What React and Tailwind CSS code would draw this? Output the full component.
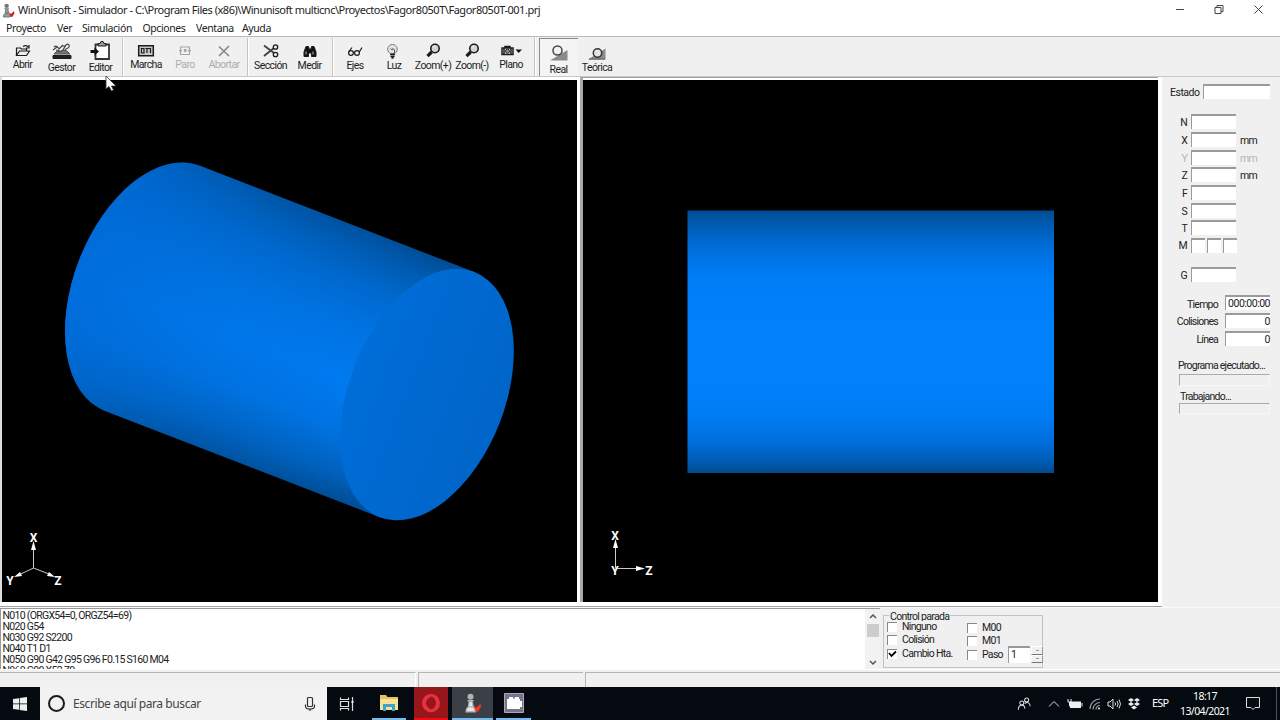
import React from "react";

const menus = [
  ["Proyecto", "w-[46px]"],
  ["Ver", "w-[20px]"],
  ["Simulación", "w-[55.5px]"],
  ["Opciones", "w-[48.5px]"],
  ["Ventana", "w-[41px]"],
  ["Ayuda", "w-[35px]"],
];

const code = [
  "N010 (ORGX54=0, ORGZ54=69)",
  "N020 G54",
  "N030 G92 S2200",
  "N040 T1 D1",
  "N050 G90 G42 G95 G96 F0.15 S160 M04",
  "N060 G00 X52 Z0",
];

function ChessIcon({ className }) {
  return (
    <svg viewBox="0 0 14 16" className={className}>
      <circle cx="5" cy="3" r="2.4" fill="#777" />
      <path d="M2.5 6h5M4 6.5 3.4 11h3.8L6.3 6.5M1.5 15c0-2 1-3.5 2-4h3.5c1 .8 1.8 2 1.8 4z" fill="#999" stroke="#777" />
      <path d="m7.5 9.5 2.3 2.2L13 8.5l.4 2.5-2.2 3.8-1.8.2z" fill="#c6201c" />
    </svg>
  );
}

function ToolButton({ label, text = "-mt-[2px]", disabled, pressed, children }) {
  return (
    <div
      className={`flex h-[38px] w-[39px] flex-col items-center pt-[3px] ${
        pressed ? "border-l border-t border-[#8a8a8a] bg-[#f4f4f4] pt-[2px]" : ""
      }`}
    >
      <svg
        viewBox="0 0 24 20"
        fill="none"
        stroke="currentColor"
        className={`h-5 w-6 shrink-0 ${disabled ? "text-[#a5a5a5]" : "text-[#1c1c1c]"}`}
      >
        {children}
      </svg>
      <span
        className={`whitespace-nowrap text-[10.5px] leading-[11px] tracking-[-0.6px] ${text} ${
          disabled ? "text-[#adadad]" : "text-[#1c1c1c]"
        }`}
      >
        {label}
      </span>
    </div>
  );
}

function Separator() {
  return <div className="h-[38px] w-[2px] border-l border-[#c4c4c4] bg-white" />;
}

function Magnifier() {
  return (
    <>
      <circle cx="14" cy="7.5" r="4.2" fill="#d4d4d4" strokeWidth="1.6" />
      <path d="m10.7 11-4.2 4.2" strokeWidth="3.2" />
      <path d="M12 6.6a2.4 2.4 0 0 1 2.2-1.6" stroke="#fff" />
    </>
  );
}

function Toolbar() {
  return (
    <div className="flex h-[40px] border-b border-[#c8c8c8] pl-[3px] pt-px">
      <div className="flex w-[119px]">
        <ToolButton label="Abrir">
          <path d="M5.5 14.5V7h4l1 1h5v2M5.5 14.5l3-4.5h10l-3 4.5zM12 5.5c2-1.5 4-1 5 .5m1-2v3h-3" fill="#eee" strokeWidth="1.2" />
        </ToolButton>
        <ToolButton label="Gestor" text="mt-px">
          <path d="M3 14.5h18v3H3z" fill="#222" />
          <path d="m4 13 3-3 3 1 3-2 4 1 3 3z" fill="#777" stroke="#555" />
          <path d="M4 6c2-2 4 0 5 2l4-4M6 9c2 0 4 2 6 1s2-4 4-6 4 0 3 2-3 1-4 3M3 9l4-3M12 5h3" strokeWidth="1.2" stroke="#444" />
        </ToolButton>
        <ToolButton label="Editor" text="mt-px">
          <path d="M6.500 3.500h13.500v14.500H6.500z" fill="#fff" strokeWidth="1.800" stroke="#333" />
          <path d="M9 5V2.500h2l1-2h2l1 2h2V5z" fill="#999" strokeWidth="1" />
          <path d="M1.500 9h4V6.500l4.500 4-4.500 4V12h-4z" fill="#111" stroke="none" />
        </ToolButton>
      </div>
      <Separator />
      <div className="ml-[2.500px] flex w-[120px]">
        <ToolButton label="Marcha">
          <path d="M4.700 4.700h14.600v10H4.700z" fill="#c8c8c8" strokeWidth="1.500" />
          <path d="M7.500 7.500h2.500v4.500H7.500zM11.500 7.500h5.500M13 7.500v4.500M16.500 7.500V12" strokeWidth="1.200" />
        </ToolButton>
        <ToolButton label="Paro" disabled>
          <path d="M7.500 6h9v7.500h-9zM11.500 8.500h1.500v2h-1.500zM6 9.700h3m6 0h3" strokeWidth="1.200" />
        </ToolButton>
        <ToolButton label="Abortar" disabled>
          <path d="m7 5.500 10 9.500M17 5 7 15" stroke="#888" strokeWidth="1.600" />
        </ToolButton>
      </div>
      <Separator />
      <div className="ml-[2.500px] flex w-[80.500px]">
        <ToolButton label="Sección" text="-mt-px">
          <path d="m5 4.500 10 7.500M5 15l10-8" strokeWidth="1.900" stroke="#444" />
          <circle cx="16.500" cy="6" r="2.200" strokeWidth="1.300" />
          <circle cx="16.500" cy="13.500" r="2.200" strokeWidth="1.300" />
        </ToolButton>
        <ToolButton label="Medir" text="-mt-px">
          <path d="M6 15.500V11l2-5.500h2.500L11 8h2l.5-2.500H16l2 5.500v4.500h-4.500V12h-3v3.500z" fill="#111" />
          <path d="M8 10.500v3m7-3v3" stroke="#bbb" />
        </ToolButton>
      </div>
      <Separator />
      <div className="ml-[2px] flex w-[198px]">
        <ToolButton label="Ejes" text="-mt-px">
          <circle cx="8" cy="12" r="2.400" strokeWidth="1.200" />
          <circle cx="14" cy="12" r="2.400" strokeWidth="1.200" />
          <path d="M5.600 11 9 6.500M16.300 11 19 6.500M10.500 11h1" strokeWidth="1.200" />
        </ToolButton>
        <ToolButton label="Luz" text="-mt-px">
          <path d="M8 12.500C3.500 9 6 3.500 10.500 3.500S17.200 9 13 12.500z" fill="#e2e2e2" stroke="#777" />
          <path d="M8.500 7.500 10 9l1-1.500L12.500 9v3" stroke="#555" />
          <path d="M8.200 13.500h4.800M8.500 15.500h4M9.500 17h2" strokeWidth="1.500" />
        </ToolButton>
        <ToolButton label="Zoom(+)" text="-mt-px">
          <Magnifier />
        </ToolButton>
        <ToolButton label="Zoom(-)" text="-mt-px">
          <Magnifier />
        </ToolButton>
        <ToolButton label="Plano">
          <path d="M3 7h11v6.500H3zM6 7V5.500h5V7M5 7v6M12 7v6" strokeWidth="1.500" />
          <circle cx="8.500" cy="10.200" r="2" fill="#999" />
          <path d="M16.500 8.500h6.500L19.700 12z" fill="#111" stroke="none" />
        </ToolButton>
      </div>
      <Separator />
      <div className="ml-[3px] flex">
        <ToolButton label="Real" text="mt-[2px]" pressed>
          <path d="M3 18.500h17.500V8z" fill="#8a8a8a" stroke="none" />
          <circle cx="10.500" cy="8.500" r="4.500" fill="#f2f2f2" stroke="#444" strokeWidth="1.500" />
        </ToolButton>
        <ToolButton label="Teórica" text="mt-px">
          <path d="M3 18.500h17.500V7.500z" fill="#8a8a8a" stroke="none" />
          <circle cx="12.500" cy="12" r="4.200" fill="#e4e4e4" stroke="#333" strokeWidth="1.500" />
          <path d="M4 18h16" strokeWidth="1.200" stroke="#666" />
        </ToolButton>
      </div>
    </div>
  );
}

function IsoView() {
  return (
    <svg viewBox="2 80 575 522" className="h-[522px] w-[575px] bg-black">
      <defs>
        <linearGradient id="side" x1="0" y1="-131.400" x2="0" y2="131.400" gradientUnits="userSpaceOnUse">
          <stop offset="0" stopColor="#004d96" />
          <stop offset="0.080" stopColor="#005ab0" />
          <stop offset="0.200" stopColor="#0068cd" />
          <stop offset="0.380" stopColor="#0075e6" />
          <stop offset="0.560" stopColor="#007bf2" />
          <stop offset="0.740" stopColor="#0074e4" />
          <stop offset="0.900" stopColor="#0061be" />
          <stop offset="1" stopColor="#004d94" />
        </linearGradient>
        <linearGradient id="depth" x1="-373" y1="0" x2="-40" y2="0" gradientUnits="userSpaceOnUse">
          <stop offset="0" stopColor="#006ad6" stopOpacity="0.800" />
          <stop offset="0.500" stopColor="#006bd4" stopOpacity="0.250" />
          <stop offset="1" stopColor="#006bd4" stopOpacity="0" />
        </linearGradient>
        <linearGradient id="cap" x1="0" x2="1" y1="0" y2="0">
          <stop offset="0" stopColor="#006dd8" />
          <stop offset="1" stopColor="#0065c8" />
        </linearGradient>
      </defs>
      <g transform="translate(427 394.600) rotate(21.150)">
        <path d="M0-131.400H-295A78 131.400 0 0 0-295 131.400H0z" fill="url(#side)" />
        <path d="M0-131.400H-295A78 131.400 0 0 0-295 131.400H0z" fill="url(#depth)" />
        <ellipse rx="78" ry="131.400" fill="url(#cap)" />
      </g>
      <path d="M33.500 568v-25M33.500 568l-17 8M33.500 568l18 7" stroke="#ccc" />
      <path d="m33.500 541 2.500 9h-5zM14 577l6-5 2 4zM55 577l-8-1 2-4z" fill="#fff" />
      <g className="fill-white text-[12px] font-bold" textAnchor="middle">
        <text x="33.500" y="542">X</text>
        <text x="10" y="585">Y</text>
        <text x="58" y="585">Z</text>
      </g>
    </svg>
  );
}

function FrontView() {
  return (
    <svg viewBox="583 80 575 522" className="h-[522px] w-[575px] bg-black">
      <defs>
        <linearGradient id="front" x1="0" x2="0" y1="0" y2="1">
          <stop offset="0" stopColor="#004c92" />
          <stop offset="0.060" stopColor="#005db4" />
          <stop offset="0.130" stopColor="#006cd4" />
          <stop offset="0.200" stopColor="#0077ec" />
          <stop offset="0.280" stopColor="#007ef8" />
          <stop offset="0.400" stopColor="#0080fa" />
          <stop offset="0.680" stopColor="#0080fa" />
          <stop offset="0.800" stopColor="#007af0" />
          <stop offset="0.880" stopColor="#006edb" />
          <stop offset="0.950" stopColor="#005eb8" />
          <stop offset="1" stopColor="#004a90" />
        </linearGradient>
      </defs>
      <rect x="687.500" y="210.500" width="366.500" height="262.500" fill="url(#front)" />
      <path d="M615.500 568v-26M615.500 568.500h27" stroke="#ccc" />
      <path d="m615.500 539 2.500 9h-5zM645 568.500l-9-2.500v5z" fill="#fff" />
      <g className="fill-white text-[12px] font-bold" textAnchor="middle">
        <text x="615" y="540">X</text>
        <text x="615" y="575">Y</text>
        <text x="649" y="575">Z</text>
      </g>
    </svg>
  );
}

function Field({ className = "w-[45px]", value }) {
  return (
    <div
      className={`h-[15px] border-l-[1.5px] border-t-2 border-[#9a9a9a] bg-white text-right leading-[13px] tracking-[-0.5px] ${className}`}
    >
      {value}
    </div>
  );
}

function StatePanel() {
  return (
    <aside className="w-[118px] text-[10.5px] leading-[13px] tracking-[-0.75px] text-[#222]">
      <div className="flex items-center gap-[4px] pl-[8px] pt-[7px]">
        <span className="w-[29px] pt-px tracking-[-0.5px]">Estado</span>
        <Field className="w-[67px]" />
      </div>
      <div className="mt-[14px] flex flex-col">
        {["N", "X", "Y", "Z", "F", "S", "T"].map((axis) => (
          <div
            key={axis}
            className={`flex h-[17.7px] items-center ${axis === "Y" ? "text-[#b5b5b5]" : ""}`}
          >
            <span className="w-[25px] pt-[2px] text-right">{axis}</span>
            <Field className="ml-[4px] w-[45px]" />
            {"XYZ".includes(axis) && <span className="ml-[4px] pt-[2px]">mm</span>}
          </div>
        ))}
        <div className="flex h-[17px] items-center">
          <span className="w-[25px] pt-px text-right">M</span>
          <div className="ml-[4px] flex gap-[2px]">
            <Field className="w-[14px]" />
            <Field className="w-[14px]" />
            <Field className="w-[14px]" />
          </div>
        </div>
        <div className="mt-[13px] flex h-[16px] items-center">
          <span className="w-[25px] pt-[2px] text-right">G</span>
          <Field className="ml-[4px] w-[45px]" />
        </div>
      </div>
      <div className="mt-[11px] flex flex-col">
        {[
          ["Tiempo", "000:00:00"],
          ["Colisiones", "0"],
          ["Línea", "0"],
        ].map(([name, value]) => (
          <div key={name} className="flex h-[17.7px] items-center">
            <span className="w-[56px] pt-[3px] text-right">{name}</span>
            <Field className="ml-[7px] w-[45px]" value={value} />
          </div>
        ))}
      </div>
      <div className="mt-[12px] flex flex-col pl-[16px]">
        <span className="whitespace-nowrap">Programa ejecutado...</span>
        <div className="ml-px mt-[2px] h-[12px] w-[91px] border border-b-[#f8f8f8] border-l-[#aaa] border-r-[#f8f8f8] border-t-[#aaa]" />
        <span className="ml-[2px] mt-[4px]">Trabajando...</span>
        <div className="ml-px h-[11px] w-[91px] border border-b-[#f8f8f8] border-l-[#aaa] border-r-[#f8f8f8] border-t-[#aaa]" />
      </div>
    </aside>
  );
}

function Check({ label, checked }) {
  return (
    <div className="flex h-[13.5px] items-center gap-[5px]">
      <div className="h-[10px] w-[10px] border-l-[1.5px] border-t-[1.5px] border-[#888] bg-white">
        {checked && (
          <svg viewBox="0 0 9 9" className="h-[9px] w-[9px]">
            <path d="m1 3 2.500 3L8 1.500" fill="none" stroke="#000" strokeWidth="1.800" />
          </svg>
        )}
      </div>
      <span>{label}</span>
    </div>
  );
}

function SpinButton() {
  return (
    <div className="flex h-[8.5px] w-[12px] items-center justify-center border border-b-[#777] border-l-white border-r-[#999] border-t-white">
      <span className="h-px w-[3px] bg-[#999]" />
    </div>
  );
}

function StopControl() {
  return (
    <div className="relative ml-[3px] mt-[7px] flex h-[53px] w-[160px] border border-[#c2c2c2] text-[10.5px] leading-[12px] tracking-[-0.7px] text-[#222]">
      <span className="absolute -top-[6px] left-[5px] h-[11px] overflow-hidden bg-[#f0f0f0] px-px leading-[14px]">
        Control parada
      </span>
      <div className="w-[80px] pl-[3px] pt-[4px]">
        <Check label="Ninguno" />
        <Check label="Colisión" />
        <Check label="Cambio Hta." checked />
      </div>
      <div className="pl-[3px] pt-[5px]">
        <Check label="M00" />
        <Check label="M01" />
        <Check label="Paso" />
      </div>
      <div className="absolute left-[124px] top-[30px] flex">
        <div className="h-[17px] w-[22px] border-l-[1.5px] border-t-2 border-[#9a9a9a] bg-white pl-[2px] leading-[14px]">1</div>
        <div className="ml-px flex flex-col">
          <SpinButton />
          <SpinButton />
        </div>
      </div>
    </div>
  );
}

function Taskbar() {
  return (
    <footer className="flex h-[33px] bg-[#040a10] font-['Noto_Sans',sans-serif] text-white">
      <div className="flex w-[40px] items-center justify-center">
        <svg viewBox="0 0 14 14" className="h-[14px] w-[14px] fill-[#eee]">
          <path d="M0 2 6 1.200v5.400H0zM6.700 1.100 14 0v6.600H6.700zM0 7.300h6v5.400L0 12zM6.700 7.300H14V14l-7.300-1.100z" />
        </svg>
      </div>
      <div className="flex w-[287px] items-center bg-[#f2f2f2] pl-[8px] text-[#444]">
        <div className="h-[17px] w-[17px] rounded-full border-[2.5px] border-[#1b1b1b]" />
        <span className="ml-[8px] text-[12px] tracking-[-0.42px]">Escribe aquí para buscar</span>
        <svg viewBox="0 0 12 16" className="ml-auto mr-[11px] h-[16px] w-[12px]" fill="none" stroke="#333" strokeWidth="1.200">
          <rect x="3.500" y="1.500" width="5" height="9" rx="1" />
          <path d="M1.500 8.500v2c0 1.500 1.500 2.500 4.500 2.500s4.500-1 4.500-2.500v-2M6 13v2" />
        </svg>
      </div>
      <div className="flex w-[45px] items-center justify-center pr-[6px]">
        <svg viewBox="0 0 16 16" className="h-[16px] w-[16px]" fill="none" stroke="#ddd" strokeWidth="1.200">
          <path d="M1.500 1.500v2h8v-2M1.500 14.500v-2h8v2M1.500 5.500h8v5h-8zM13.500 1v14" />
          <path d="M12.500 5h2v2h-2z" fill="#eee" stroke="none" />
        </svg>
      </div>
      <div className="flex w-[34px] items-center justify-center border-b-2 border-[#76b9ed]">
        <svg viewBox="0 0 20 18" className="h-[18px] w-[20px]">
          <path d="M1 1h6l1.500 2H19v13H1z" fill="#e5c55b" />
          <path d="M1 5h18v11H1z" fill="#f6e294" />
          <path d="M4 10h12v7h-3v-4H7v4H4z" fill="#39a5cf" />
        </svg>
      </div>
      <div className="ml-[8px] flex w-[34px] items-center justify-center border-b-2 border-[#f00b12] bg-[#97161b]">
        <svg viewBox="0 0 20 20" className="h-[20px] w-[20px]">
          <ellipse cx="10" cy="10" rx="7" ry="7.300" fill="none" stroke="#e8313c" strokeWidth="4" />
          <ellipse cx="10.500" cy="10" rx="3.800" ry="6.500" fill="#97161b" />
        </svg>
      </div>
      <div className="ml-[4px] flex w-[41px] items-center justify-center border-b-2 border-[#76b9ed] bg-[#3a4046]">
        <ChessIcon className="h-[20px] w-[18px] brightness-150" />
      </div>
      <div className="ml-[3px] flex w-[35px] items-center justify-center border-b-2 border-[#76b9ed]">
        <svg viewBox="0 0 20 20" className="h-[20px] w-[20px]">
          <path d="M0.500 0.500h19v19H0.500z" fill="#77758e" stroke="#aaa8bc" />
          <path d="M3 6h2V4h4v1.500h2V4h4v2h1v2h2v6h-2v2H3z" fill="#fff" />
        </svg>
      </div>
      <div className="ml-auto flex items-center">
        <svg viewBox="0 0 16 16" className="mr-[17px] h-[15px] w-[14px]" fill="none" stroke="#ddd" strokeWidth="1.200">
          <circle cx="11" cy="4" r="2.300" />
          <circle cx="5.500" cy="7.500" r="2.300" />
          <path d="M1.500 15c0-3 1.500-5 4-5s3.500 2 3.500 4M9 8c3-2.500 6-.5 6 3" />
        </svg>
        <svg viewBox="0 0 12 8" className="mr-[7px] h-[8px] w-[12px]" fill="none" stroke="#ddd">
          <path d="m1 6.500 5-5 5 5" />
        </svg>
        <svg viewBox="0 0 16 12" className="mr-[6px] h-[12px] w-[16px]">
          <path d="M3 3.500h11v6.500H3z" fill="#eee" />
          <path d="M1 1v3h3V1M2.500 4v4H5M15 5v3.500" fill="none" stroke="#eee" />
        </svg>
        <svg viewBox="0 0 12 12" className="mr-[6px] h-[12px] w-[12px]" fill="none" stroke="#999" strokeWidth="1.200">
          <path d="M1 11A10 10 0 0 1 11 1M4 11.500a7 7 0 0 1 7-7M7 11.500a4 4 0 0 1 4-4" />
          <circle cx="10" cy="10.500" r="1" fill="#eee" stroke="none" />
        </svg>
        <svg viewBox="0 0 14 12" className="mr-[7px] h-[12px] w-[14px]" fill="none" stroke="#ddd">
          <path d="M1 4h2l3-3v10L3 8H1zM8 4.500q1.200 1.500 0 3M10 3q2.200 3 0 6M12 1.500q3 4.500 0 9" />
        </svg>
        <svg viewBox="0 0 12 12" className="mr-[12px] h-[12px] w-[12px] fill-[#eee]">
          <path d="M3 0l3 2-3 2-3-2zM9 0l3 2-3 2-3-2zM3 4l3 2-3 2-3-2zM9 4l3 2-3 2-3-2zM6 7.500l3 2-3 2-3-2z" />
        </svg>
        <span className="w-[27px] text-[11px] tracking-[-0.8px]">ESP</span>
        <div className="w-[52px] text-center text-[10.5px] leading-[15px] tracking-[-0.6px]">
          <div>18:17</div>
          <div>13/04/2021</div>
        </div>
        <svg viewBox="0 0 14 14" className="ml-[15px] h-[14px] w-[14px]" fill="none" stroke="#ddd">
          <path d="M.5.500h13v10H9l-2 2-2-2H.500z" />
        </svg>
        <div className="ml-[16px] h-[33px] w-[4px] border-l border-[#555]" />
      </div>
    </footer>
  );
}

export default function App() {
  return (
    <div className="relative flex h-[720px] w-[1280px] flex-col overflow-hidden bg-[#f0f0f0] font-[Roboto,'Liberation_Sans',sans-serif]">
      <header className="h-[37px] border-b border-[#b9b9b9] bg-white font-['Noto_Sans',sans-serif] text-[#222]">
        <div className="flex h-[20px] items-center pl-[2px]">
          <ChessIcon className="h-[15px] w-[13px]" />
          <span className="ml-[3px] whitespace-nowrap text-[11px] leading-[20px] tracking-[-0.47px]">
            WinUnisoft - Simulador - C:\Program Files (x86)\Winunisoft multicnc\Proyectos\Fagor8050T\Fagor8050T-001.prj
          </span>
          <svg viewBox="0 0 90 12" className="ml-auto mr-[16px] h-[12px] w-[90px]" fill="none" stroke="#444">
            <path d="M2 5.500h8M41 3.500h6v6h-6zM43 3.500v-2h6v6h-2M80.500 1.500l8 8M88.500 1.500l-8 8" />
          </svg>
        </div>
        <nav className="flex h-[16px] items-center pl-[6px] text-[10.5px] leading-[14px] tracking-[-0.4px]">
          {menus.map(([name, width]) => (
            <span key={name} className={`mr-[5px] whitespace-nowrap ${width}`}>
              {name}
            </span>
          ))}
        </nav>
      </header>
      <Toolbar />

      <main className="flex h-[530px]">
        <div className="flex h-[530px] w-[1162px] border-b border-[#a0a0a0] bg-white pb-[4px]">
          <div className="border-l-2 border-[#ddd] pt-[3px]">
            <IsoView />
          </div>
          <div className="ml-[3px] w-[3px] bg-[#a8a8a8]" />
          <div className="border-t border-[#a0a0a0] pt-[2px]">
            <FrontView />
          </div>
        </div>
        <StatePanel />
      </main>

      <section className="flex h-[62px] border-t border-[#fafafa]">
        <div className="flex h-[61px] w-[880px] border-l border-t border-[#999] bg-white">
          <div className="h-[60px] grow overflow-hidden pl-[1.5px] pt-[2px] text-[10.5px] leading-[10.9px] tracking-[-0.7px] text-[#222]">
            {code.map((line) => (
              <div key={line}>{line}</div>
            ))}
          </div>
          <div className="flex w-[15px] flex-col items-center bg-[#f2f2f2]">
            <svg viewBox="0 0 14 60" className="h-[60px] w-[14px]" fill="none" stroke="#555" strokeWidth="1.500">
              <path d="m4 9 3-3 3 3M4 52l3 3 3-3" />
              <path d="M1 15h12v13H1z" fill="#cdcdcd" stroke="none" />
            </svg>
          </div>
        </div>
        <StopControl />
      </section>

      <div className="flex h-[18px] gap-[2px] border-t border-white pt-[2px]">
        <div className="w-[416px] border-r border-t border-r-white border-t-[#b5b5b5]" />
        <div className="w-[165px] border-l border-t border-[#b5b5b5]" />
        <div className="grow border-l border-t border-[#b5b5b5]" />
      </div>
      <Taskbar />

      <svg viewBox="0 0 12 17" className="absolute left-[105px] top-[75px] h-[17px] w-[12px]">
        <path d="M1 1v13l3-2.500L6.500 16l2-1-2-4H11z" fill="#fff" stroke="#333" strokeWidth="0.800" />
      </svg>
    </div>
  );
}
